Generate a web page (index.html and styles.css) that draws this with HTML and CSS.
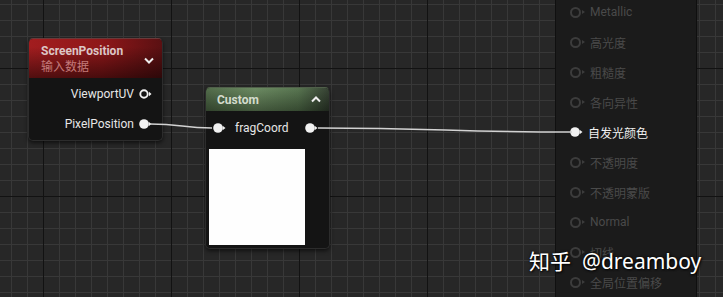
FILE: index.html
```html
<!DOCTYPE html>
<html lang="zh">
<head>
    <meta charset="UTF-8">
    <title>Material Graph</title>
    <link rel="stylesheet" href="styles.css">
</head>
<body>
    <div class="graph">
        <svg class="wires" width="723" height="297">
            <path d="M150 124 C 182 124, 182 128, 212 128"/>
            <path d="M318 128 C 440 128, 450 132, 572 132"/>
        </svg>

        <div class="node node-screen">
            <div class="node-head head-red">
                <div class="titles">
                    <div class="title">ScreenPosition</div>
                    <div class="subtitle">输入数据</div>
                </div>
                <svg class="chev" width="10" height="7" viewBox="0 0 10 7"><path d="M1 1.5 L5 5.5 L9 1.5"/></svg>
            </div>
            <div class="node-body">
                <div class="row row-out">
                    <span>ViewportUV</span>
                    <svg class="pin" width="13" height="10" viewBox="0 0 13 10"><circle class="ring" cx="5" cy="5" r="3.7"/><path class="arrow" d="M10 2.8 L12.5 5 L10 7.2 Z"/></svg>
                </div>
                <div class="row row-out">
                    <span>PixelPosition</span>
                    <svg class="pin" width="13" height="10" viewBox="0 0 13 10"><circle class="dot" cx="5" cy="5" r="4.8"/><path class="arrow" d="M9.6 2.8 L12.5 5 L9.6 7.2 Z"/></svg>
                </div>
            </div>
        </div>

        <div class="node node-custom">
            <div class="node-head head-green">
                <div class="title">Custom</div>
                <svg class="chev" width="10" height="7" viewBox="0 0 10 7"><path d="M1 5.5 L5 1.5 L9 5.5"/></svg>
            </div>
            <div class="node-body">
                <div class="row row-io">
                    <svg class="pin" width="13" height="10" viewBox="0 0 13 10"><circle class="dot" cx="5" cy="5" r="4.8"/><path class="arrow" d="M9.6 2.8 L12.5 5 L9.6 7.2 Z"/></svg>
                    <span class="io-label">fragCoord</span>
                    <svg class="pin" width="13" height="10" viewBox="0 0 13 10"><circle class="dot" cx="5" cy="5" r="4.8"/><path class="arrow" d="M9.6 2.8 L12.5 5 L9.6 7.2 Z"/></svg>
                </div>
                <div class="preview"></div>
            </div>
        </div>

        <div class="result">
            <div class="inputs">
                <div class="input off"><i class="pin-off"></i>Metallic</div>
                <div class="input off"><i class="pin-off"></i>高光度</div>
                <div class="input off"><i class="pin-off"></i>粗糙度</div>
                <div class="input off"><i class="pin-off"></i>各向异性</div>
                <div class="input on">
                    <svg class="pin" width="13" height="10" viewBox="0 0 13 10"><circle class="dot" cx="5" cy="5" r="4.8"/><path class="arrow" d="M9.6 2.8 L12.5 5 L9.6 7.2 Z"/></svg>自发光颜色
                </div>
                <div class="input off"><i class="pin-off"></i>不透明度</div>
                <div class="input off"><i class="pin-off"></i>不透明蒙版</div>
                <div class="input off"><i class="pin-off"></i>Normal</div>
                <div class="input off"><i class="pin-off"></i>切线</div>
                <div class="input off"><i class="pin-off"></i>全局位置偏移</div>
            </div>
        </div>

        <div class="watermark"><span>知乎</span><span class="author">@dreamboy</span></div>
    </div>
</body>
</html>
```

FILE: styles.css
```css
body { margin: 0; background: #262626; font-family: Roboto, "Noto Sans CJK SC", sans-serif; overflow: hidden; }
.graph { position: relative; width: 723px; height: 297px; overflow: hidden; background-color: #272727;
    background-image:
        linear-gradient(to right, #121212 1px, transparent 1px),
        linear-gradient(to bottom, #121212 1px, transparent 1px),
        linear-gradient(to right, #383838 1px, transparent 1px),
        linear-gradient(to bottom, #383838 1px, transparent 1px);
    background-size: 128px 128px, 128px 128px, 16px 16px, 16px 16px;
    background-position: 43px 0, 0 68px, 11px 0, 0 4px; }

.wires { position: absolute; left: 0; top: 0; z-index: 3; pointer-events: none; }
.wires path { fill: none; stroke: #d2d2d2; stroke-width: 1.6; }

.node { position: absolute; z-index: 2; background: #141414; border: 1px solid #2c2c2c; border-radius: 5px; box-shadow: 0 2px 4px rgba(0,0,0,0.6); overflow: hidden; }
.node-head { display: flex; align-items: center; justify-content: space-between; padding: 0 8px 0 12px; }
.title { font-size: 12px; font-weight: 700; line-height: 16px; }
.subtitle { font-size: 12px; line-height: 16px; color: #c47a7a; }
.chev path { fill: none; stroke: #eeeeee; stroke-width: 2; }
.pin .dot { fill: #f2f2f2; }
.pin .ring { fill: none; stroke: #f2f2f2; stroke-width: 1.9; }
.pin .arrow { fill: #f2f2f2; }

.node-screen { left: 28px; top: 38px; width: 133px; border-top-color: #6a3a3a; }
.head-red { height: 39px; background:
    linear-gradient(to bottom, rgba(0,0,0,0) 20%, rgba(0,0,0,0.5) 100%),
    linear-gradient(to right, #a21d1f 0%, #8e1719 55%, #5a1012 100%); }
.head-red .title { color: #dcc6c6; }
.head-red .chev { margin-top: 4px; }
.node-screen .node-body { padding: 1px 0 1px; }
.row { display: flex; align-items: center; height: 30px; font-size: 12px; color: #e6e6e6; }
.row-out { justify-content: flex-end; gap: 5px; padding-right: 10px; }

.node-custom { left: 205px; top: 87px; width: 123px; border-top-color: #50604a; }
.head-green { height: 23px; padding-left: 11px; background:
    linear-gradient(to bottom, rgba(255,255,255,0.04) 0%, rgba(0,0,0,0.35) 100%),
    linear-gradient(to right, #4c6744 0%, #66865c 40%, #52704a 75%, #2f3b2c 100%); }
.head-green .title { color: #d4dccd; }
.node-custom .node-body { padding: 2px 0 3px 3px; }
.row-io { padding-left: 4px; gap: 0; }
.io-label { margin: 0 0 0 9px; width: 70px; }
.preview { width: 96px; height: 96px; margin-top: 6px; background: #fefefe; }

.result { position: absolute; left: 555px; top: 0; width: 140px; height: 297px; z-index: 1; background: #1b1b1b; border-left: 1px solid #101010; border-right: 1px solid #0f0f0f; }
.inputs { margin-top: -3px; padding-left: 14px; }
.input { display: flex; align-items: center; height: 30px; font-size: 12px; gap: 5px; }
.input.off { color: #4a4a4a; }
.input.on { color: #f0f0f0; }
.pin-off { position: relative; width: 7px; height: 7px; border: 2px solid #3c3c3c; border-radius: 50%; margin-right: 4px; }
.pin-off::after { content: ""; position: absolute; left: 10px; top: 1px; border-left: 3px solid #3c3c3c; border-top: 2.5px solid transparent; border-bottom: 2.5px solid transparent; }

.watermark { position: absolute; left: 529px; top: 247px; z-index: 4; display: flex; gap: 11px; font-family: "Noto Sans", "Noto Sans CJK SC", sans-serif; font-size: 21px; line-height: 29px; color: #ffffff; text-shadow: 0 0 3px rgba(0,0,0,0.9), 1px 1px 2px rgba(0,0,0,0.8); white-space: nowrap; }
```
